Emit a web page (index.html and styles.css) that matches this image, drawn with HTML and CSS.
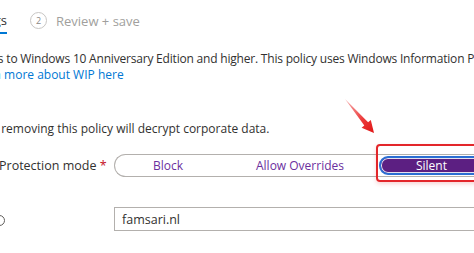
FILE: index.html
```html
<!DOCTYPE html>
<html lang="en">
<head>
  <meta charset="UTF-8">
  <title>Protection mode</title>
  <link rel="stylesheet" href="styles.css">
</head>
<body>
  <div class="page">
    <div class="tabs">
      <div class="tab tab-active">Settings</div>
      <div class="tab tab-next">
        <span class="step">2</span>
        <span>Review + save</span>
      </div>
    </div>

    <p class="intro">Applies to Windows 10 Anniversary Edition and higher. This policy uses Windows Information Protection</p>
    <a class="learn" href="#">Learn more about WIP here</a>

    <p class="note">Warning: removing this policy will decrypt corporate data.</p>

    <div class="field field-mode">
      <label class="label">Protection mode <span class="req">*</span></label>
      <div class="toggle">
        <span class="seg">Block</span>
        <span class="seg">Allow Overrides</span>
        <span class="seg seg-on">Silent</span>
      </div>
    </div>

    <div class="field field-domain">
      <label class="label"><span class="info"></span></label>
      <input class="text-input" type="text" value="famsari.nl">
    </div>
  </div>

  <div class="callout"></div>
  <svg class="arrow" width="40" height="42" viewBox="0 0 40 42">
    <defs>
      <linearGradient id="arrowFill" x1="0" y1="0" x2="1" y2="1">
        <stop offset="0" stop-color="#f7b3b3"/>
        <stop offset="0.6" stop-color="#ec3b3b"/>
        <stop offset="1" stop-color="#e01515"/>
      </linearGradient>
    </defs>
    <polygon points="5,4 28.1,27.3 30.8,25 34,38 21.6,32.8 24.3,30.5" fill="url(#arrowFill)"/>
  </svg>
</body>
</html>
```

FILE: styles.css
```css
body {
  font-family: 'Open Sans', sans-serif;
  background-color: #fff;
  color: #323130;
  margin: 0;
  width: 474px;
  height: 253px;
  overflow: hidden;
  position: relative;
}
.page {
  font-size: 12px;
}
.tabs {
  display: flex;
  align-items: center;
  height: 34px;
  margin-left: -49px;
}
.tab {
  height: 34px;
  line-height: 40px;
  box-sizing: border-box;
  font-size: 13px;
}
.tab-active {
  width: 56px;
  overflow: hidden;
  text-align: right;
  white-space: nowrap;
  border-bottom: 2px solid #0078d4;
  color: #323130;
  margin-right: 23px;
}
.tab-next {
  display: flex;
  align-items: center;
  gap: 9px;
  color: #a19f9d;
  padding-top: 7px;
}
.step {
  width: 15px;
  height: 15px;
  border: 1px solid #c8c6c4;
  border-radius: 50%;
  font-size: 9px;
  line-height: 15px;
  text-align: center;
  color: #8a8886;
}
.intro {
  margin: 17px 0 0 -36px;
  white-space: nowrap;
  line-height: 16px;
  letter-spacing: -0.2px;
}
.learn {
  display: block;
  margin-left: -31px;
  color: #0078d4;
  text-decoration: none;
  line-height: 16px;
  white-space: nowrap;
}
.note {
  margin: 38px 0 0 -52px;
  line-height: 16px;
  white-space: nowrap;
}
.field {
  display: grid;
  grid-template-columns: 114px 1fr;
  align-items: center;
}
.field-mode {
  margin-top: 17px;
}
.field-domain {
  margin-top: 30px;
}
.label {
  white-space: nowrap;
  margin-left: -1px;
  font-size: 12.5px;
}
.req {
  color: #c50f1f;
}
.toggle {
  display: grid;
  grid-template-columns: 104px 104px 104px;
  column-gap: 28px;
  align-items: center;
  width: 390px;
  height: 23px;
  box-sizing: border-box;
  border: 1px solid #b3b0ad;
  border-right: none;
  border-radius: 12px 0 0 12px;
  padding-left: 1px;
}
.seg {
  text-align: center;
  color: #6b2f9e;
  line-height: 17px;
}
.seg-on {
  margin-left: -1px;
  background-color: #5c1f82;
  color: #fff;
  border: 2px solid #2b6fd3;
  border-radius: 9px;
  box-shadow: inset 0 0 0 1px #e6e0f0;
  line-height: 15px;
  height: 15px;
}
.info {
  display: inline-block;
  width: 9px;
  height: 9px;
  border: 1px solid #605e5c;
  border-radius: 50%;
  margin-left: -5px;
  vertical-align: middle;
}
.text-input {
  width: 380px;
  height: 24px;
  box-sizing: border-box;
  border: 1px solid #b3b0ad;
  border-right: none;
  padding: 0 7px;
  font-family: 'Open Sans', sans-serif;
  font-size: 12.5px;
  color: #323130;
  outline: none;
}
.callout {
  position: absolute;
  left: 376px;
  top: 144px;
  width: 110px;
  height: 38px;
  box-sizing: border-box;
  border: 2px solid #e3262a;
  border-radius: 4px;
  box-shadow: 0 2px 4px rgba(227, 38, 42, 0.2);
}
.arrow {
  position: absolute;
  left: 340px;
  top: 95px;
}
```
